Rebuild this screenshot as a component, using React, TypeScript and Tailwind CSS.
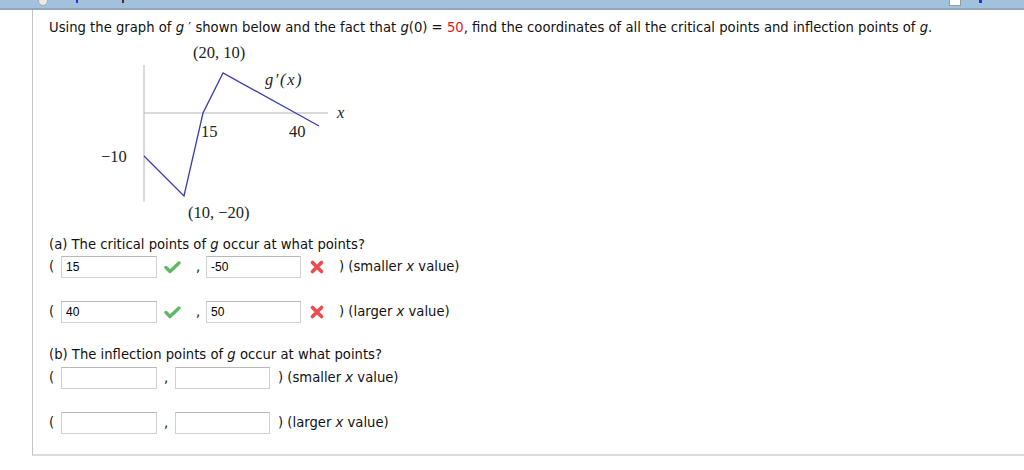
import React from 'react'

const verdana = { fontFamily: '"DejaVu Sans", Verdana, sans-serif' }

function Check() {
  return (
    <svg width="17" height="14" viewBox="0 0 17 14" className="block">
      <path d="M2 7.5 L6 11.5 L15 3" fill="none" stroke="#62b862" strokeWidth="3.4" strokeLinecap="round" strokeLinejoin="round" />
    </svg>
  )
}

function Cross() {
  return (
    <svg width="14" height="14" viewBox="0 0 14 14" className="block">
      <path d="M2.5 2.5 L11.5 11.5 M11.5 2.5 L2.5 11.5" fill="none" stroke="#ec4c4f" strokeWidth="3.6" strokeLinecap="round" />
    </svg>
  )
}

function Box({ value, w = 'w-[96px]' }: { value?: string; w?: string }) {
  return (
    <div
      className={`${w} h-[22px] border border-[#d0d0d0] border-t-[#b8b8b8] bg-white pl-[4px] flex items-center text-[12px] text-black`}
      style={{ fontFamily: '"Liberation Sans", Arial, sans-serif' }}
    >
      {value}
    </div>
  )
}

function Graph() {
  const serif = { fontFamily: '"Liberation Serif", "Times New Roman", serif' }
  return (
    <svg width="250" height="182" viewBox="0 0 250 182" className="block ml-[52px] mt-[4px]" style={serif}>
      <line x1="43" y1="25" x2="43" y2="162" stroke="#b5b5b5" strokeWidth="1" />
      <line x1="43" y1="73" x2="227" y2="73" stroke="#b5b5b5" strokeWidth="1" />
      <polyline points="43,116 83,156 102,73 122,33 218,86" fill="none" stroke="#3b3bb0" strokeWidth="1.3" />
      <g fill="#222" fontSize="16.5">
        <text x="92" y="18">(20, 10)</text>
        <text x="164" y="45" fontStyle="italic" letterSpacing="1.6">g′(x)</text>
        <text x="236" y="78" fontStyle="italic">x</text>
        <text x="100" y="97">15</text>
        <text x="188" y="97">40</text>
        <text x="0" y="122">−10</text>
        <text x="87" y="178">(10, −20)</text>
      </g>
    </svg>
  )
}

export default function App() {
  return (
    <div className="w-[1024px] h-[470px] bg-white overflow-hidden text-[13.2px] text-[#111]" style={verdana}>
      <div className="h-[10px] bg-[#a2c1dd] border-b-2 border-[#8da6bb] relative">
        <div className="absolute left-[38px] -top-[4px] w-[10px] h-[10px] rounded-full bg-[#e8e8e8] border border-[#aaa]" />
        <div className="absolute left-[76px] top-0 w-[2px] h-[3px] bg-[#1a35e0]" />
        <div className="absolute left-[122px] top-0 w-[2px] h-[3px] bg-[#55222a]" />
        <div className="absolute left-[949px] -top-[2px] w-[12px] h-[8px] bg-white border border-[#999]" />
        <div className="absolute left-[979px] top-0 w-[3px] h-[3px] bg-[#1a35e0]" />
      </div>
      <div className="ml-[32px] border-l border-b-2 border-l-[#c4c4c4] border-b-[#dcdcdc] pl-[16px] pb-[20px]">
        <p className="pt-[10px] leading-[16px] whitespace-nowrap">
          Using the graph of <i>g</i> ′ shown below and the fact that <i>g</i>(0) = <span className="text-[#e8141a]">50</span>, find the coordinates of all the critical points and inflection points of <i>g</i>.
        </p>
        <Graph />

        <p className="mt-[15px] leading-[16px]">
          (a) The critical points of <i>g</i> occur at what points?
        </p>
        <div className="mt-[3px] flex items-center h-[22px]">
          <span className="w-[12px]">(</span>
          <Box value="15" />
          <span className="ml-[7px]"><Check /></span>
          <span className="w-[25px] pl-[15px]">,</span>
          <Box value="-50" w="w-[95px]" />
          <span className="ml-[9px]"><Cross /></span>
          <span className="ml-[15px]">) (smaller <i>x</i> value)</span>
        </div>
        <div className="mt-[23px] flex items-center h-[22px]">
          <span className="w-[12px]">(</span>
          <Box value="40" />
          <span className="ml-[7px]"><Check /></span>
          <span className="w-[25px] pl-[15px]">,</span>
          <Box value="50" w="w-[95px]" />
          <span className="ml-[9px]"><Cross /></span>
          <span className="ml-[15px]">) (larger <i>x</i> value)</span>
        </div>

        <p className="mt-[24px] leading-[16px]">
          (b) The inflection points of <i>g</i> occur at what points?
        </p>
        <div className="mt-[4px] flex items-center h-[22px]">
          <span className="w-[12px]">(</span>
          <Box />
          <span className="w-[18px] pl-[7px]">,</span>
          <Box w="w-[95px]" />
          <span className="ml-[8px]">) (smaller <i>x</i> value)</span>
        </div>
        <div className="mt-[23px] flex items-center h-[22px]">
          <span className="w-[12px]">(</span>
          <Box />
          <span className="w-[18px] pl-[7px]">,</span>
          <Box w="w-[95px]" />
          <span className="ml-[8px]">) (larger <i>x</i> value)</span>
        </div>
      </div>
    </div>
  )
}
